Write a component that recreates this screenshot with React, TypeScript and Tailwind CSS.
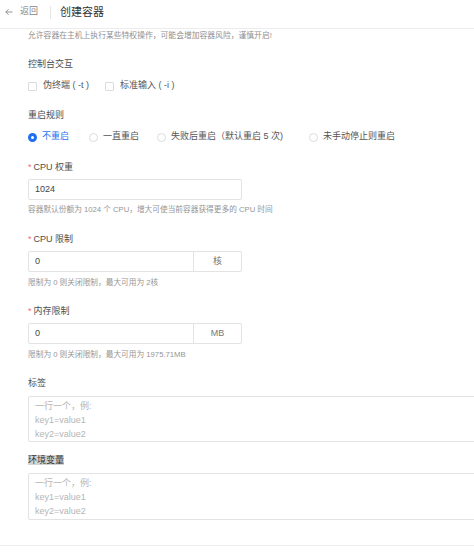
import { useState } from 'react';

const font = 'font-["Liberation_Sans","Noto_Sans_CJK_SC",sans-serif]';

function Label({ text, required, className = '' }: { text: string; required?: boolean; className?: string }) {
    return (
        <div className={`h-[14px] leading-[14px] text-[9px] text-[#4d4d4d] ${className}`}>
            {required && <span className="text-[#ff6b6b] mr-[2px]">*</span>}
            {text}
        </div>
    );
}

function Help({ text, className = '' }: { text: string; className?: string }) {
    return <div className={`h-[14px] leading-[14px] text-[7.7px] text-[#959595] ${className}`}>{text}</div>;
}

function NumberInput({ value, unit, className = '' }: { value: string; unit?: string; className?: string }) {
    return (
        <div className={`flex w-[214px] h-[21px] border border-[#e3e3e3] rounded-[2px] bg-white ${className}`}>
            <input
                defaultValue={value}
                className="flex-1 min-w-0 px-[6px] text-[9px] text-[#444] outline-none bg-transparent"
            />
            {unit && (
                <div className="w-[48px] border-l border-[#e3e3e3] flex items-center justify-center text-[9px] text-[#777]">
                    {unit}
                </div>
            )}
        </div>
    );
}

function Radio({ label, checked, onClick, className = '' }: { label: string; checked: boolean; onClick: () => void; className?: string }) {
    return (
        <button onClick={onClick} className={`flex items-center h-[14px] ${className}`}>
            <span
                className={
                    'w-[9px] h-[9px] rounded-full box-border ' +
                    (checked ? 'border-[3px] border-[#1f6ff2] bg-white' : 'border border-[#dcdcdc] bg-white')
                }
            />
            <span className={'ml-[5px] text-[9px] ' + (checked ? 'text-[#2a74f0]' : 'text-[#555]')}>{label}</span>
        </button>
    );
}

function Checkbox({ label }: { label: string }) {
    return (
        <label className="flex items-center h-[14px]">
            <span className="w-[9px] h-[9px] border border-[#dcdcdc] rounded-[1px] bg-white" />
            <span className="ml-[6px] text-[9px] text-[#555]">{label}</span>
        </label>
    );
}

const restartRules = [
    { label: '不重启', gap: '' },
    { label: '一直重启', gap: 'ml-[20px]' },
    { label: '失败后重启（默认重启 5 次)', gap: 'ml-[18px]' },
    { label: '未手动停止则重启', gap: 'ml-[26px]' },
];

export default function App() {
    const [rule, setRule] = useState(0);

    return (
        <div className={`relative w-[474px] h-[553px] bg-white overflow-hidden ${font}`}>
            {/* page header */}
            <div className="h-[29px] flex items-center border-b border-[#ececec]">
                <svg className="ml-[5px] mt-[-4px]" width="8" height="8" viewBox="0 0 8 8" fill="none" stroke="#888" strokeWidth="0.9">
                    <path d="M7.5 4H0.8M3.6 1.2L0.8 4l2.8 2.8" />
                </svg>
                <span className="ml-[7px] mt-[-4px] text-[9px] text-[#888]">返回</span>
                <span className="ml-[12px] mt-[-4px] w-px h-[13px] bg-[#e6e6e6]" />
                <span className="ml-[9px] mt-[-4px] text-[11px] text-[#333]">创建容器</span>
            </div>

            <div className="pl-[28px]">
                <div className="h-[13px] leading-[13px] text-[7.8px] text-[#8f8f8f]">
                    允许容器在主机上执行某些特权操作，可能会增加容器风险，谨慎开启!
                </div>

                <Label text="控制台交互" className="mt-[15px]" />
                <div className="mt-[8px] flex">
                    <Checkbox label="伪终端 ( -t )" />
                    <div className="ml-[16px]">
                        <Checkbox label="标准输入 ( -i )" />
                    </div>
                </div>

                <Label text="重启规则" className="mt-[15px]" />
                <div className="mt-[8px] flex">
                    {restartRules.map((r, i) => (
                        <Radio key={r.label} label={r.label} className={r.gap} checked={rule === i} onClick={() => setRule(i)} />
                    ))}
                </div>

                <Label text="CPU 权重" required className="mt-[16px]" />
                <NumberInput value="1024" className="mt-[5px]" />
                <Help text="容器默认份额为 1024 个 CPU，增大可使当前容器获得更多的 CPU 时间" className="mt-[3px]" />

                <Label text="CPU 限制" required className="mt-[15px]" />
                <NumberInput value="0" unit="核" className="mt-[5px]" />
                <Help text="限制为 0 则关闭限制，最大可用为 2核" className="mt-[4px]" />

                <Label text="内存限制" required className="mt-[14px]" />
                <NumberInput value="0" unit="MB" className="mt-[5px]" />
                <Help text="限制为 0 则关闭限制，最大可用为 1975.71MB" className="mt-[4px]" />

                <Label text="标签" className="mt-[14px]" />
                <textarea
                    placeholder={'一行一个，例:\nkey1=value1\nkey2=value2'}
                    className="mt-[6px] block w-[470px] h-[46px] border border-[#e3e3e3] rounded-[2px] px-[6px] py-[2px] text-[9px] leading-[14px] resize-none outline-none placeholder:text-[#b5b5b5]"
                />

                <div className="mt-[11px] h-[14px] leading-[14px] text-[9px] text-[#333]">
                    <span className="bg-[#d4d4d4]">环境变量</span>
                </div>
                <textarea
                    placeholder={'一行一个，例:\nkey1=value1\nkey2=value2'}
                    className="mt-[6px] block w-[470px] h-[47px] border border-[#e3e3e3] rounded-[2px] px-[6px] py-[2px] text-[9px] leading-[14px] resize-none outline-none placeholder:text-[#b5b5b5]"
                />
            </div>

            <div className="mt-[25px] border-t border-[#eeeeee]" />
        </div>
    );
}
